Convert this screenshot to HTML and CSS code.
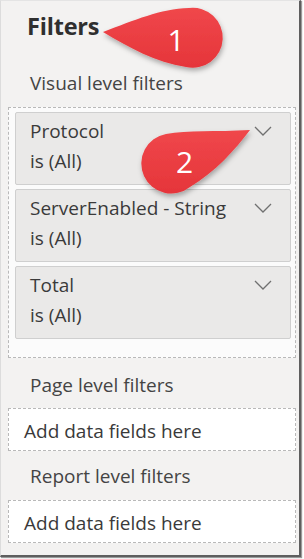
FILE: index.html
```html
<!DOCTYPE html>
<html>
<head>
<meta charset="utf-8">
<link rel="stylesheet" href="styles.css">
</head>
<body>
<div class="panel">
  <div class="title">Filters</div>
  <div class="section-label first">Visual level filters</div>
  <div class="well">
    <div class="card">
      <div class="card-text"><div>Protocol</div><div>is (All)</div></div>
      <svg class="chev" viewBox="0 0 18 10"><path d="M1 1 L9 9 L17 1" fill="none" stroke="#707070" stroke-width="1.3"/></svg>
    </div>
    <div class="card">
      <div class="card-text"><div>ServerEnabled - String</div><div>is (All)</div></div>
      <svg class="chev" viewBox="0 0 18 10"><path d="M1 1 L9 9 L17 1" fill="none" stroke="#707070" stroke-width="1.3"/></svg>
    </div>
    <div class="card">
      <div class="card-text"><div>Total</div><div>is (All)</div></div>
      <svg class="chev" viewBox="0 0 18 10"><path d="M1 1 L9 9 L17 1" fill="none" stroke="#707070" stroke-width="1.3"/></svg>
    </div>
  </div>
  <div class="section-label">Page level filters</div>
  <div class="dropzone">Add data fields here</div>
  <div class="section-label last">Report level filters</div>
  <div class="dropzone">Add data fields here</div>

  <svg class="callouts" viewBox="0 0 300 556" width="300" height="556">
    <defs>
      <filter id="sh" x="-20%" y="-20%" width="140%" height="150%">
        <feDropShadow dx="1" dy="3" stdDeviation="2.5" flood-color="#000" flood-opacity="0.3"/>
      </filter>
      <linearGradient id="rg" x1="0" y1="0" x2="0" y2="1">
        <stop offset="0" stop-color="#f0474b"/>
        <stop offset="1" stop-color="#e5353a"/>
      </linearGradient>
    </defs>
    <path filter="url(#sh)" fill="url(#rg)" d="M103,32 C135,20 160,9 189,8 A30,30 0 1 1 186,67 C155,62 130,48 103,32 Z"/>
    <text class="num" x="176" y="51" text-anchor="middle">1</text>
    <path filter="url(#sh)" fill="url(#rg)" d="M250,130 C215,132 188,130 166,134 A30,30 0 1 0 190,187 C215,172 235,150 250,130 Z"/>
    <text class="num" x="184.5" y="173" text-anchor="middle">2</text>
  </svg>
</div>
</body>
</html>
```

FILE: styles.css
```css
* { box-sizing: border-box; }
html, body { margin: 0; padding: 0; background: #ffffff; }
body { width: 304px; height: 559px; overflow: hidden; }
.panel {
  position: relative;
  width: 301px;
  height: 557px;
  background: #f3f2f1;
  border-left: 1px solid #dcdcdc;
  border-top: 1px solid #e4e4e4;
  border-right: 2px solid #5e5e5e;
  border-bottom: 2px solid #5e5e5e;
  box-shadow: 1px 1px 1px #9a9a9a;
  font-family: "Open Sans", "DejaVu Sans", sans-serif;
  color: #3b3b3b;
  padding-left: 7px;
  padding-right: 3px;
}
.title {
  font-weight: 700;
  font-size: 23.5px;
  line-height: 26px;
  padding-top: 12px;
  padding-left: 19px;
  color: #2f2f2f;
  letter-spacing: -0.2px;
}
.section-label {
  font-size: 19px;
  line-height: 20px;
  padding-left: 22px;
  margin-top: 17px;
  margin-bottom: 13px;
  color: #444;
}
.section-label.first { margin-top: 34px; margin-bottom: 14px; }
.section-label.last { margin-top: 15px; margin-bottom: 14px; }
.well {
  background: #fbfbfb;
  border: 1px dashed #b9b9b9;
  padding: 4px 4px 18px 6px;
  display: flex;
  flex-direction: column;
  gap: 4px;
}
.card {
  background: #eae9e8;
  border: 1px solid #cfcfcf;
  border-radius: 2px;
  height: 73px;
  display: flex;
  justify-content: space-between;
  align-items: flex-start;
  padding: 3px 18px 0 14px;
}
.card-text {
  font-size: 19px;
  line-height: 30px;
  color: #3a3a3a;
}
.chev { width: 18px; height: 10px; margin-top: 10px; }
.dropzone {
  background: #ffffff;
  border: 1px dashed #b9b9b9;
  height: 43px;
  font-size: 19px;
  line-height: 38px;
  padding: 3px 0 0 15px;
  color: #3a3a3a;
}
.callouts {
  position: absolute;
  left: -1px;
  top: -1px;
  pointer-events: none;
}
.num {
  font-family: "Open Sans", "DejaVu Sans", sans-serif;
  font-size: 30px;
  fill: #ffffff;
}
```
